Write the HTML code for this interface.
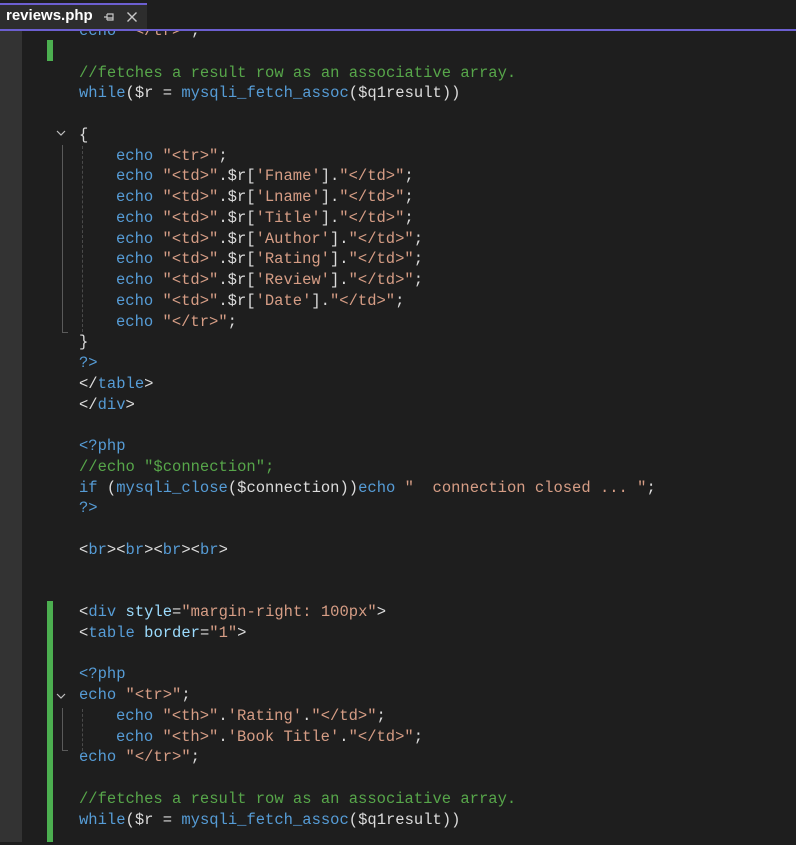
<!DOCTYPE html>
<html><head><meta charset="utf-8">
<style>
html,body{margin:0;padding:0;background:#1e1e1e;width:796px;height:842px;overflow:hidden;}
#ed{position:absolute;left:0;top:0;width:796px;height:842px;background:#1e1e1e;}
#gut{position:absolute;left:0;top:0;width:22px;height:842px;background:#333333;}
#code{position:absolute;left:0;top:3px;width:796px;height:842px;}
.l{position:absolute;left:79px;height:21px;line-height:21px;white-space:pre;font-family:"Liberation Mono",monospace;font-size:15.5px;color:#dcdcdc;}
.k{color:#569cd6}.s{color:#d69d85}.c{color:#57a64a}.a{color:#9cdcfe}.w{color:#dcdcdc}
#tabbar{position:absolute;left:0;top:0;width:796px;height:32px;background:#1e1e1e;z-index:5;}
#tabline{position:absolute;left:0;top:29px;width:796px;height:2px;background:#6c5fd0;z-index:6;}
#tab{position:absolute;left:0;top:3px;width:147px;height:26px;background:#2d2d2d;border-top:2px solid #6c5fd0;box-sizing:border-box;}
#tab span{position:absolute;left:6px;top:2px;font-family:"Liberation Sans",sans-serif;font-weight:bold;font-size:15px;color:#fff;}
.g{position:absolute;left:47px;width:6px;background:#4caf50;}
.vl{position:absolute;width:1px;background:#5a5a5a;}
.dl{position:absolute;width:0;border-left:1px dashed #4a4a4a;}
</style></head><body>
<div id="ed">
<div id="gut"></div>
<div class="g" style="top:40px;height:21px"></div>
<div class="g" style="top:601px;height:241px"></div>

<svg style="position:absolute;left:55px;top:128px" width="12" height="10"><path d="M2 3 L6 7 L10 3" stroke="#c0c0c0" fill="none" stroke-width="1.2"/></svg>
<svg style="position:absolute;left:55px;top:691px" width="12" height="10"><path d="M2 3 L6 7 L10 3" stroke="#c0c0c0" fill="none" stroke-width="1.2"/></svg>
<div class="vl" style="left:62px;top:145px;height:187px"></div>
<div class="vl" style="left:62px;top:332px;width:6px;height:1px"></div>
<div class="dl" style="left:82px;top:146px;height:186px"></div>
<div class="vl" style="left:62px;top:708px;height:42px"></div>
<div class="vl" style="left:62px;top:750px;width:6px;height:1px"></div>
<div class="dl" style="left:82px;top:709px;height:42px"></div>

<div id="code">
<div class="l" style="top:18px"><span class="k">echo</span> <span class="s">"&lt;/tr&gt;"</span>;</div>
<div class="l" style="top:59.5px"><span class="c">//fetches a result row as an associative array.</span></div>
<div class="l" style="top:80.3px"><span class="k">while</span>(<span class="w">$r</span> = <span class="k">mysqli_fetch_assoc</span>(<span class="w">$q1result</span>))</div>
<div class="l" style="top:122px">{</div>
<div class="l" style="top:142.5px;left:116px"><span class="k">echo</span> <span class="s">"&lt;tr&gt;"</span>;</div>
<div class="l" style="top:163.3px;left:116px"><span class="k">echo</span> <span class="s">"&lt;td&gt;"</span>.$r[<span class="s">'Fname'</span>].<span class="s">"&lt;/td&gt;"</span>;</div>
<div class="l" style="top:184px;left:116px"><span class="k">echo</span> <span class="s">"&lt;td&gt;"</span>.$r[<span class="s">'Lname'</span>].<span class="s">"&lt;/td&gt;"</span>;</div>
<div class="l" style="top:204.8px;left:116px"><span class="k">echo</span> <span class="s">"&lt;td&gt;"</span>.$r[<span class="s">'Title'</span>].<span class="s">"&lt;/td&gt;"</span>;</div>
<div class="l" style="top:225.5px;left:116px"><span class="k">echo</span> <span class="s">"&lt;td&gt;"</span>.$r[<span class="s">'Author'</span>].<span class="s">"&lt;/td&gt;"</span>;</div>
<div class="l" style="top:246.3px;left:116px"><span class="k">echo</span> <span class="s">"&lt;td&gt;"</span>.$r[<span class="s">'Rating'</span>].<span class="s">"&lt;/td&gt;"</span>;</div>
<div class="l" style="top:267px;left:116px"><span class="k">echo</span> <span class="s">"&lt;td&gt;"</span>.$r[<span class="s">'Review'</span>].<span class="s">"&lt;/td&gt;"</span>;</div>
<div class="l" style="top:287.8px;left:116px"><span class="k">echo</span> <span class="s">"&lt;td&gt;"</span>.$r[<span class="s">'Date'</span>].<span class="s">"&lt;/td&gt;"</span>;</div>
<div class="l" style="top:308.5px;left:116px"><span class="k">echo</span> <span class="s">"&lt;/tr&gt;"</span>;</div>
<div class="l" style="top:329.3px">}</div>
<div class="l" style="top:350px"><span class="k">?&gt;</span></div>
<div class="l" style="top:370.8px">&lt;/<span class="k">table</span>&gt;</div>
<div class="l" style="top:391.5px">&lt;/<span class="k">div</span>&gt;</div>
<div class="l" style="top:433px"><span class="k">&lt;?php</span></div>
<div class="l" style="top:453.8px"><span class="c">//echo "$connection";</span></div>
<div class="l" style="top:474.5px"><span class="k">if</span> (<span class="k">mysqli_close</span>(<span class="w">$connection</span>))<span class="k">echo</span> <span class="s">"  connection closed ... "</span>;</div>
<div class="l" style="top:495.3px"><span class="k">?&gt;</span></div>
<div class="l" style="top:536.8px">&lt;<span class="k">br</span>&gt;&lt;<span class="k">br</span>&gt;&lt;<span class="k">br</span>&gt;&lt;<span class="k">br</span>&gt;</div>
<div class="l" style="top:599px">&lt;<span class="k">div</span> <span class="a">style</span>=<span class="s">"margin-right: 100px"</span>&gt;</div>
<div class="l" style="top:619.8px">&lt;<span class="k">table</span> <span class="a">border</span>=<span class="s">"1"</span>&gt;</div>
<div class="l" style="top:661.3px"><span class="k">&lt;?php</span></div>
<div class="l" style="top:682px"><span class="k">echo</span> <span class="s">"&lt;tr&gt;"</span>;</div>
<div class="l" style="top:702.8px;left:116px"><span class="k">echo</span> <span class="s">"&lt;th&gt;"</span>.<span class="s">'Rating'</span>.<span class="s">"&lt;/td&gt;"</span>;</div>
<div class="l" style="top:723.5px;left:116px"><span class="k">echo</span> <span class="s">"&lt;th&gt;"</span>.<span class="s">'Book Title'</span>.<span class="s">"&lt;/td&gt;"</span>;</div>
<div class="l" style="top:744.3px"><span class="k">echo</span> <span class="s">"&lt;/tr&gt;"</span>;</div>
<div class="l" style="top:785.8px"><span class="c">//fetches a result row as an associative array.</span></div>
<div class="l" style="top:806.5px"><span class="k">while</span>(<span class="w">$r</span> = <span class="k">mysqli_fetch_assoc</span>(<span class="w">$q1result</span>))</div>
</div>
</div>

<div id="tabbar" style="height:29px;overflow:hidden">
<div id="tab"><span>reviews.php</span>
<svg style="position:absolute;left:103px;top:6px" width="12" height="12"><path d="M1 6 H4 M4 3 V9 M4 3 H10 V9 H4 M4 7 H10" stroke="#c8c8c8" fill="none" stroke-width="1.2"/></svg>
<svg style="position:absolute;left:126px;top:6px" width="12" height="12"><path d="M1.5 1.5 L10.5 10.5 M10.5 1.5 L1.5 10.5" stroke="#c8c8c8" stroke-width="1.4"/></svg>
</div>
</div>
<div id="tabline"></div>
</body></html>
